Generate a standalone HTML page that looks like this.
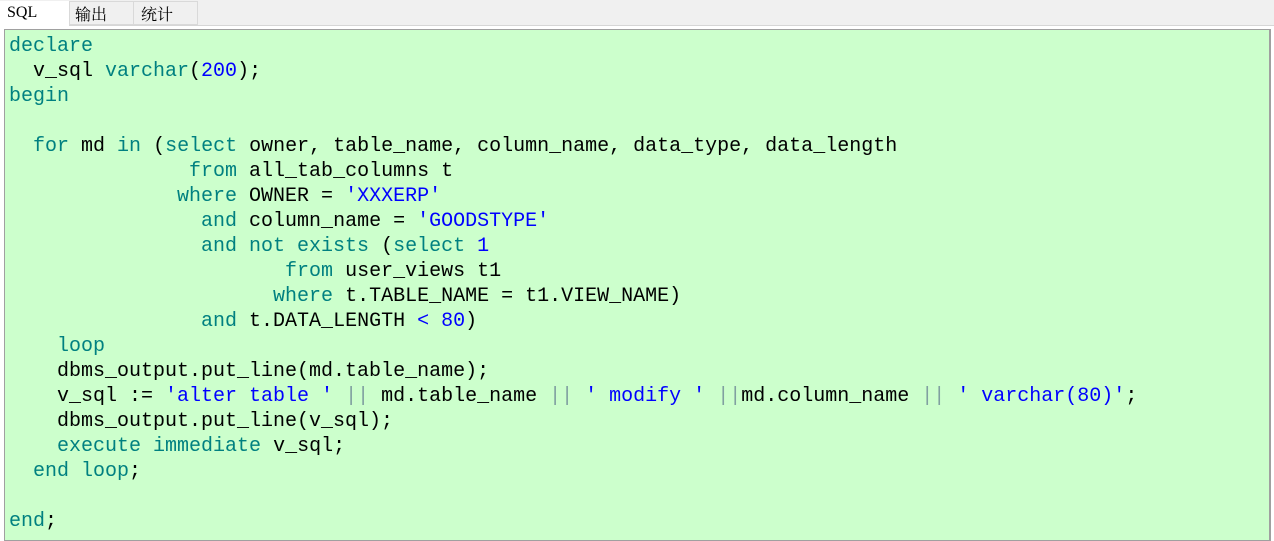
<!DOCTYPE html>
<html><head><meta charset="utf-8"><style>
body{margin:0;width:1274px;height:533px;overflow:hidden;background:#fff;font-family:"Liberation Serif","Noto Serif CJK SC",serif;position:relative}
.bar{position:absolute;left:0;top:0;width:1274px;height:25px;background:#f0f0f0;border-bottom:1px solid #d6d6d6}
.tab{position:absolute;top:1px;height:24px;font-size:16px;line-height:24px;color:#000;box-sizing:border-box}
.t1{left:0;width:69px;background:#fff;padding-left:7px;height:26px}
.t2{left:69px;width:65px;background:#f0f0f0;border:1px solid #d9d9d9;padding-left:5px;font-family:"Noto Serif CJK SC",serif}
.t3{left:133px;width:65px;background:#f0f0f0;border:1px solid #d9d9d9;padding-left:7px;font-family:"Noto Serif CJK SC",serif}
.panel{position:absolute;left:4px;top:29px;width:1264px;height:510px;border:1px solid #a0a0a0;border-right-width:2px;background:#ccffcc}
pre{margin:0;position:absolute;left:4px;top:4px;font-family:"Liberation Mono",monospace;font-size:20px;line-height:25px;color:#000}
.k{color:#008080}.n{color:#0000ff}.s{color:#0000ff}.o{color:#80a0a0}
</style></head><body>
<div class="bar"></div>
<div class="tab t1">SQL</div><div class="tab t2">输出</div><div class="tab t3">统计</div>
<div class="panel"><pre><span class="k">declare</span>
  v_sql <span class="k">varchar</span>(<span class="n">200</span>);
<span class="k">begin</span>

  <span class="k">for</span> md <span class="k">in</span> (<span class="k">select</span> owner, table_name, column_name, data_type, data_length
               <span class="k">from</span> all_tab_columns t
              <span class="k">where</span> OWNER = <span class="s">'XXXERP'</span>
                <span class="k">and</span> column_name = <span class="s">'GOODSTYPE'</span>
                <span class="k">and not exists</span> (<span class="k">select</span> <span class="n">1</span>
                       <span class="k">from</span> user_views t1
                      <span class="k">where</span> t.TABLE_NAME = t1.VIEW_NAME)
                <span class="k">and</span> t.DATA_LENGTH <span class="n">&lt;</span> <span class="n">80</span>)
    <span class="k">loop</span>
    dbms_output.put_line(md.table_name);
    v_sql := <span class="s">'alter table '</span> <span class="o">||</span> md.table_name <span class="o">||</span> <span class="s">' modify '</span> <span class="o">||</span>md.column_name <span class="o">||</span> <span class="s">' varchar(80)'</span>;
    dbms_output.put_line(v_sql);
    <span class="k">execute immediate</span> v_sql;
  <span class="k">end loop</span>;

<span class="k">end</span>;</pre></div>
</body></html>
